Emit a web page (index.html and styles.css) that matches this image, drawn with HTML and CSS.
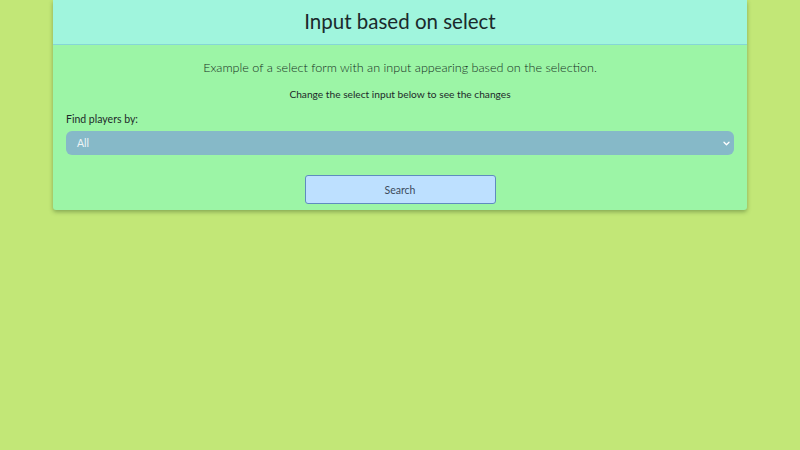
FILE: index.html
```html
<!DOCTYPE html>
<html>
<head>
<meta charset="utf-8">
<link rel="stylesheet" href="styles.css">
</head>
<body>
<div class="container">
  <div class="card">
    <div class="card-header">Input based on select</div>
    <div class="card-body">
      <p class="lead">Example of a select form with an input appearing based on the selection.</p>
      <p class="hint">Change the select input below to see the changes</p>
      <label class="label">Find players by:</label>
      <div class="select">
        <span>All</span>
        <svg class="chev" width="7" height="5" viewBox="0 0 8 6"><path d="M1 1.5 L4 4.5 L7 1.5" fill="none" stroke="#ffffff" stroke-width="1.6" stroke-linecap="round" stroke-linejoin="round"/></svg>
      </div>
      <div class="actions"><button class="btn">Search</button></div>
    </div>
  </div>
</div>
</body>
</html>
```

FILE: styles.css
```css
* { box-sizing: border-box; }
html, body { margin: 0; padding: 0; }
body {
  background: #c2e777;
  font-family: "Lato", "Open Sans", sans-serif;
  color: #1d2a2a;
  width: 800px;
  height: 450px;
}
.container {
  width: 694px;
  margin: 0 auto;
}
.card {
  background: #9cf5a6;
  box-shadow: 0 2px 4px rgba(60, 90, 40, 0.45);
  border-radius: 0 0 3px 3px;
}
.card-header {
  background: #a0f5dd;
  height: 45px;
  border-bottom: 1px solid #86d6d6;
  text-align: center;
  font-size: 20.5px;
  font-weight: 400;
  line-height: 42px;
  color: #1a2a2c;
}
.card-body {
  padding: 13px 13px 6px 13px;
}
.lead {
  margin: 0;
  text-align: center;
  font-size: 12.6px;
  font-weight: 300;
  color: #17301f;
  line-height: 20px;
}
.hint {
  margin: 8px 0 0 0;
  text-align: center;
  font-size: 10.2px;
  line-height: 16px;
  color: #1d2a2a;
}
.label {
  display: block;
  margin-top: 9px;
  font-size: 10.5px;
  line-height: 16px;
  color: #1d2a2a;
}
.select {
  margin-top: 4px;
  height: 24px;
  background: #86b9c8;
  border-radius: 6px;
  display: flex;
  align-items: center;
  justify-content: space-between;
  padding: 0 4px 0 11px;
  color: #eef4f6;
  font-size: 10.5px;
}
.actions {
  display: flex;
  justify-content: center;
  margin-top: 20px;
}
.btn {
  width: 191px;
  height: 29px;
  background: #bde0ff;
  border: 1px solid #5f8cbf;
  border-radius: 3px;
  font-family: "Lato", "Open Sans", sans-serif;
  font-size: 10.5px;
  color: #3c4b5c;
}
```
